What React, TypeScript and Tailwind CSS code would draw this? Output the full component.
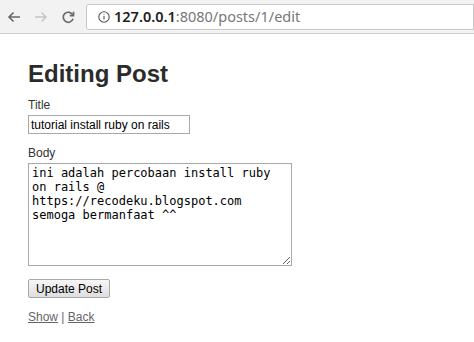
import { useState } from "react";

const bodyText =
  "ini adalah percobaan install ruby on rails @\nhttps://recodeku.blogspot.com\nsemoga bermanfaat ^^";

export default function App() {
  const [title, setTitle] = useState("tutorial install ruby on rails");
  const [body, setBody] = useState(bodyText);

  return (
    <div className="w-[474px] h-[342px] bg-white overflow-hidden font-['Liberation_Sans',Arial,sans-serif] text-[#333]">
      {/* browser toolbar */}
      <div className="h-[34px] bg-[#f2f2f2] border-b border-[#cfcfcf] flex items-center pl-[6px]">
        <div className="flex items-center gap-[11px] text-[#6a6a6a]">
          <svg width="16" height="16" viewBox="0 0 16 16" fill="none" stroke="currentColor" strokeWidth="1.6">
            <path d="M14 8H3M7.5 3.5L3 8l4.5 4.5" />
          </svg>
          <svg width="16" height="16" viewBox="0 0 16 16" fill="none" stroke="#c4c4c4" strokeWidth="1.4">
            <path d="M2 8h11M8.5 3.5L13 8l-4.5 4.5" />
          </svg>
          <svg width="16" height="16" viewBox="0 0 16 16" fill="none" stroke="currentColor" strokeWidth="1.7">
            <path d="M12.8 6.2A5 5 0 1 0 13 9.8" />
            <path d="M13.5 2.8v3.8H9.7" fill="none" />
          </svg>
        </div>
        <div className="ml-[10px] flex-1 h-[26px] bg-white border border-[#c8c8c8] rounded-l-[3px] flex items-center pl-[11px] font-['Noto_Sans',sans-serif] text-[14.5px]">
          <svg width="12" height="12" viewBox="0 0 12 12" fill="none" stroke="#555" strokeWidth="1.1">
            <circle cx="6" cy="6" r="5.2" />
            <path d="M6 5v3.6M6 3.2v0.9" />
          </svg>
          <span className="ml-[4px] text-[#222] font-semibold">127.0.0.1</span>
          <span className="text-[#777]">:8080/posts/1/edit</span>
        </div>
      </div>

      {/* page */}
      <div className="pl-[28px]">
        <h1 className="mt-[26px] text-[24px] leading-[28px] font-bold text-[#2b2b2b]">Editing Post</h1>

        <form className="mt-[10px] text-[12px]" onSubmit={(e) => e.preventDefault()}>
          <div>
            <label className="block leading-[14px] text-[#333]">Title</label>
            <input
              value={title}
              onChange={(e) => setTitle(e.target.value)}
              className="mt-[3px] w-[162px] h-[19px] border border-[#a9a9a9] px-[2px] text-[12px] text-black outline-none"
            />
          </div>

          <div className="mt-[12px]">
            <label className="block leading-[14px] text-[#333]">Body</label>
            <textarea
              value={body}
              onChange={(e) => setBody(e.target.value)}
              spellCheck
              className="mt-[3px] block w-[264px] h-[103px] border border-[#a9a9a9] px-[3px] py-[2px] font-['DejaVu_Sans_Mono',monospace] text-[12px] leading-[14px] text-black outline-none resize"
            />
          </div>

          <button
            type="submit"
            className="mt-[13px] h-[19px] w-[82px] border border-[#a9a9a9] rounded-[2px] bg-gradient-to-b from-[#f6f6f6] to-[#dedede] text-[12px] text-black leading-none"
          >
            Update Post
          </button>
        </form>

        <div className="mt-[10px] text-[12px] text-[#666]">
          <a href="#" className="underline">Show</a> | <a href="#" className="underline">Back</a>
        </div>
      </div>
    </div>
  );
}
